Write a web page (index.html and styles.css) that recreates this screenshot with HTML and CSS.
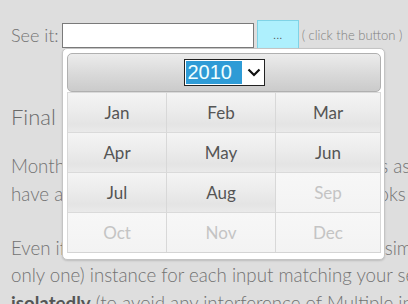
FILE: index.html
```html
<!DOCTYPE html>
<html>
<head>
<meta charset="utf-8">
<link rel="stylesheet" href="styles.css">
</head>
<body>
<div class="page">
  <div class="demo-row">
    <span class="label">See it:</span>
    <span class="input"></span>
    <span class="btn">...</span>
    <span class="hint">( click the button )</span>
  </div>
  <h2 class="heading">Final notes</h2>
  <p class="para">
    <span class="line">Monthpicker shows months for any input fields as</span>
    <span class="line">have a simple and clean month widget, that looks nice</span>
  </p>
  <p class="para">
    <span class="line">Even if you call it only once, it still generates a simple (and</span>
    <span class="line">only one) instance for each input matching your selector</span>
    <span class="line"><b>isolatedly</b> (to avoid any interference of Multiple inputs)</span>
  </p>
</div>

<div class="picker">
  <div class="picker-head">
    <div class="year-select">
      <span class="year-value">2010</span>
      <svg class="chev" width="14" height="9" viewBox="0 0 14 9"><path d="M1.5 1.5 L7 7 L12.5 1.5" fill="none" stroke="#111" stroke-width="2.2"/></svg>
    </div>
  </div>
  <div class="months">
    <div class="m">Jan</div><div class="m">Feb</div><div class="m">Mar</div>
    <div class="m">Apr</div><div class="m">May</div><div class="m">Jun</div>
    <div class="m">Jul</div><div class="m">Aug</div><div class="m off">Sep</div>
    <div class="m off">Oct</div><div class="m off">Nov</div><div class="m off">Dec</div>
  </div>
</div>
</body>
</html>
```

FILE: styles.css
```css
html, body {
  margin: 0;
  padding: 0;
  background: #dedede;
  overflow: hidden;
  width: 408px;
  height: 304px;
}
body {
  font-family: Lato, "Liberation Sans", sans-serif;
  font-weight: 300;
  color: #727272;
  position: relative;
}
.page {
  padding: 20px 0 0 11px;
  white-space: nowrap;
}
.demo-row {
  display: flex;
  align-items: center;
  height: 29px;
}
.label {
  font-size: 18px;
  margin-right: 3px;
}
.input {
  display: block;
  width: 190px;
  height: 23px;
  background: #fff;
  border: 1px solid #7a7a7a;
  margin-top: 1px;
}
.btn {
  display: flex;
  align-items: flex-end;
  justify-content: center;
  box-sizing: border-box;
  width: 42px;
  height: 29px;
  margin-left: 3px;
  background: #aef0fd;
  border: 1px solid #7fd3e6;
  font-family: "Liberation Sans", sans-serif;
  font-size: 11px;
  color: #555;
  padding-bottom: 7px;
}
.hint {
  font-size: 13px;
  margin-left: 3px;
  color: #808080;
}
.heading {
  font-size: 22px;
  font-weight: 300;
  line-height: 30px;
  margin: 53px 0 0;
  color: #6a6a6a;
}
.para {
  font-size: 18.7px;
  line-height: 27.5px;
  margin: 21px 0 26.5px;
}
.line {
  display: block;
}
.para b {
  font-weight: 700;
  color: #555;
}

.picker {
  position: absolute;
  left: 62px;
  top: 48px;
  width: 314px;
  padding: 4px 3px 6px 4px;
  background: #fff;
  border: 1px solid #c4c4c4;
  border-radius: 5px;
  box-shadow: 0 1px 2px rgba(0,0,0,0.15);
  font-weight: 400;
}
.picker-head {
  height: 37px;
  border: 1px solid #b0b0b0;
  border-radius: 5px;
  background: linear-gradient(#ececec, #d9d9d9 55%, #cbcbcb);
  display: flex;
  justify-content: center;
  align-items: center;
}
.year-select {
  display: flex;
  align-items: center;
  box-sizing: border-box;
  width: 81px;
  height: 27px;
  background: #fff;
  border: 1px solid #222;
  padding: 0 3px 0 1px;
}
.year-value {
  background: #2e9bd6;
  color: #f0ffff;
  font-family: "Liberation Sans", sans-serif;
  font-size: 20px;
  line-height: 23px;
  padding: 0 2px;
  width: 52px;
}
.chev {
  margin-left: 5px;
}
.months {
  display: grid;
  grid-template-columns: 99px 109px 105px;
  grid-auto-rows: 40px;
  border-left: 1px solid #d8d8d8;
  border-bottom: 1px solid #d4d4d4;
}
.m {
  display: flex;
  align-items: center;
  justify-content: center;
  font-size: 17px;
  color: #555;
  border-right: 1px solid #d8d8d8;
  border-top: 1px solid #dadada;
  background: linear-gradient(#f4f4f4, #ececec 45%, #e4e4e4 80%, #eaeaea);
}
.m.off {
  color: #c4c4c4;
  background: linear-gradient(#f7f7f7, #f3f3f3);
}
```
